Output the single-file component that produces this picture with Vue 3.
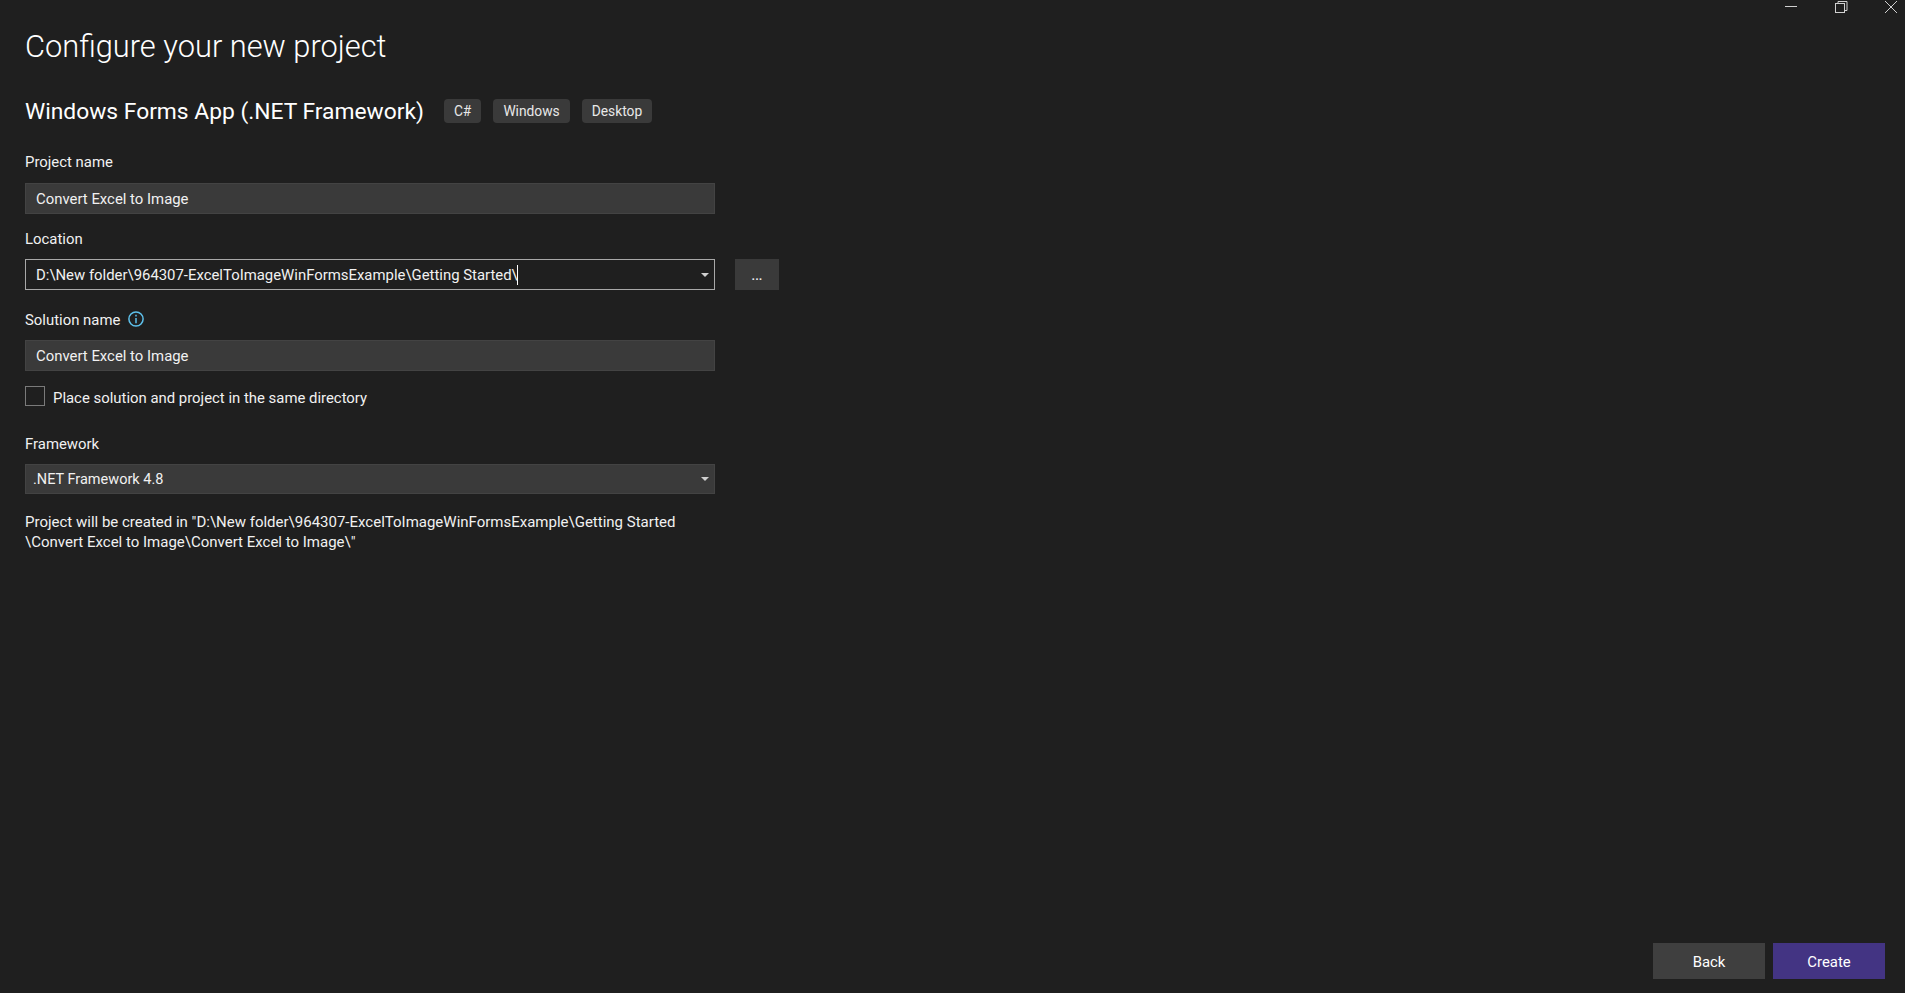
<script setup>
const tags = ['C#', 'Windows', 'Desktop']
</script>

<template>
  <div class="page">
    <div class="winctl" aria-hidden="true">
      <svg class="ico" width="14" height="14" viewBox="0 0 14 14"><path d="M1 6.5H13" stroke="#d0d0d0" stroke-width="1"/></svg>
      <svg class="ico" width="14" height="14" viewBox="0 0 14 14" fill="none" stroke="#d0d0d0"><rect x="1.5" y="3.5" width="9" height="9"/><path d="M4 3.5V1.5H13V10.5H10.5"/></svg>
      <svg class="ico" width="14" height="14" viewBox="0 0 14 14" stroke="#d0d0d0"><path d="M1 1L13 13M13 1L1 13"/></svg>
    </div>
    <main class="form">
      <h1>Configure your new project</h1>
      <div class="template">
        <h2>Windows Forms App (.NET Framework)</h2>
        <div class="tags"><span v-for="t in tags" :key="t" class="tag">{{ t }}</span></div>
      </div>
      <label class="lab first">Project name</label>
      <div class="input">Convert Excel to Image</div>
      <label class="lab loc">Location</label>
      <div class="locrow">
        <div class="input focus">
          <span>D:\New folder\964307-ExcelToImageWinFormsExample\Getting Started\</span><i class="caret"></i>
          <span class="arrow"></span>
        </div>
        <div class="browse">...</div>
      </div>
      <label class="lab sol"><span>Solution name</span>
        <svg width="16" height="16" viewBox="0 0 16 16" fill="none" stroke="#5ec1ec" stroke-width="1.5"><circle cx="8" cy="8" r="7.1"/><path d="M8 7V12.2"/><path d="M8 3.8V5.5"/></svg>
      </label>
      <div class="input solinput">Convert Excel to Image</div>
      <div class="check"><span class="box"></span><span class="checktext">Place solution and project in the same directory</span></div>
      <label class="lab fw">Framework</label>
      <div class="input select"><span>.NET Framework 4.8</span><span class="arrow"></span></div>
      <p class="note">Project will be created in "D:\New folder\964307-ExcelToImageWinFormsExample\Getting Started<br>\Convert Excel to Image\Convert Excel to Image\"</p>
    </main>
    <footer class="foot">
      <div class="btn back">Back</div>
      <div class="btn create">Create</div>
    </footer>
  </div>
</template>

<style>
html, body { margin: 0; background: #1f1f1f; }
</style>

<style scoped>
.page {
  height: 993px;
  box-sizing: border-box;
  background: #1f1f1f;
  color: #f1f1f1;
  font-family: Roboto, "Open Sans", sans-serif;
  font-size: 14.9px;
  display: flex;
  flex-direction: column;
  overflow: hidden;
  position: relative;
}
.winctl { position: absolute; top: 0; right: 7px; display: flex; gap: 36px; }
.form { padding: 27px 0 0 25px; flex: 1; }
h1 { margin: 0; font-weight: 300; font-size: 30.8px; line-height: 40px; color: #fff; }
.template { display: flex; align-items: center; margin-top: 29px; height: 30px; }
h2 { margin: 0; padding-top: 2px; font-weight: 400; font-size: 22.8px; line-height: 30px; color: #fff; }
.tags { display: flex; gap: 12px; margin-left: 20px; }
.tag { background: #3a3a3a; border-radius: 4px; height: 24px; line-height: 24px; padding: 0 10px; font-size: 13.8px; color: #e8e8e8; }
.lab { display: flex; align-items: center; gap: 8px; height: 20px; line-height: 20px; box-sizing: border-box; padding-top: 1px; }
.lab svg { margin-top: -1px; }
.first { margin-top: 25px; }
.loc { margin-top: 15px; padding-top: 0; }
.sol { margin-top: 19px; }
.fw { margin-top: 27px; }
.input {
  width: 690px;
  height: 31px;
  margin-top: 12px;
  box-sizing: border-box;
  background: #3a3a3a;
  border: 1px solid #434343;
  padding: 1px 0 0 10px;
  line-height: 29px;
  display: flex;
  align-items: center;
  position: relative;
}
.solinput { margin-top: 11px; }
.focus { background: #1f1f1f; border-color: #a8a8a8; margin-top: 0; }
.locrow { display: flex; gap: 20px; margin-top: 10px; }
.caret { display: inline-block; width: 1px; height: 20px; background: #fff; margin-left: -1px; }
.arrow { position: absolute; right: 5px; top: 50%; margin-top: -2px; border: 4px solid transparent; border-top-color: #d0d0d0; border-bottom: 0; }
.browse { width: 44px; height: 31px; background: #3a3a3a; text-align: center; line-height: 33px; font-size: 13px; font-weight: 500; color: #f1f1f1; }
.check { display: flex; align-items: center; gap: 8px; margin-top: 15px; height: 20px; }
.checktext { padding-top: 3px; }
.box { width: 20px; height: 20px; box-sizing: border-box; border: 1px solid #7a7a7a; }
.select { padding-left: 7px; height: 30px; margin-top: 11px; font-size: 14.5px; }
.note { margin: 18px 0 0; line-height: 20px; font-size: 15px; }
.foot { display: flex; justify-content: flex-end; gap: 8px; padding: 0 20px 14px; }
.btn { width: 112px; height: 36px; line-height: 38px; text-align: center; color: #fff; }
.back { background: #3f3f3f; }
.create { background: #433483; }
</style>
